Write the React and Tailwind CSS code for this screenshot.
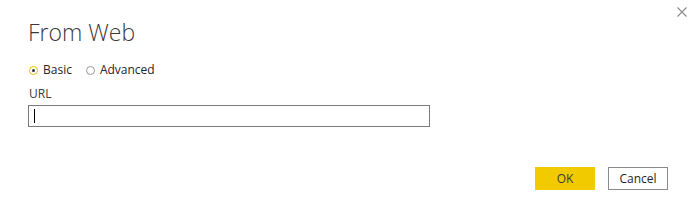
import { useState } from 'react'

const Radio = ({ checked, label, onClick }) => (
  <button onClick={onClick} className="flex items-center gap-[5px] text-[12px] text-[#252423]">
    <span
      className={`w-[9px] h-[9px] rounded-full border-[1.5px] flex items-center justify-center ${
        checked ? 'border-[#e8c000]' : 'border-[#999]'
      }`}
    >
      {checked && <span className="w-[3px] h-[3px] rounded-full bg-[#333]" />}
    </span>
    <span>{label}</span>
  </button>
)

const App = () => {
  const [mode, setMode] = useState('basic')

  return (
    <div
      className="relative w-[696px] h-[211px] bg-white overflow-hidden"
      style={{ fontFamily: '"Open Sans", "Noto Sans", sans-serif' }}
    >
      {/* Close */}
      <button className="absolute top-[7px] left-[677px] w-[10px] h-[10px]">
        <svg width="10" height="10" viewBox="0 0 10 10">
          <path d="M0.5 0.5 L9.5 9.5 M9.5 0.5 L0.5 9.5" stroke="#8a8a8a" strokeWidth="1.1" />
        </svg>
      </button>

      <div className="flex flex-col pl-[28px] pt-[17px]">
        <h1 className="text-[23px] font-light text-[#3b3a39] leading-[30px]">From Web</h1>

        <div className="flex items-center gap-[14px] mt-[14px] ml-[1px]">
          <Radio checked={mode === 'basic'} label="Basic" onClick={() => setMode('basic')} />
          <Radio checked={mode === 'advanced'} label="Advanced" onClick={() => setMode('advanced')} />
        </div>

        <label className="text-[12px] text-[#3b3a39] mt-[6px] ml-[1px] leading-[17px]">URL</label>
        <div className="mt-[3px] w-[402px] h-[22px] border border-[#7a7a7a] flex items-center pl-[5px]">
          <span className="w-[1px] h-[14px] bg-black" />
        </div>

        <div className="flex justify-end gap-[13px] mt-[40px] pr-[28px]">
          <button className="w-[60px] h-[23px] bg-[#f2ca00] text-[12px] text-[#3b3a39]">OK</button>
          <button className="w-[60px] h-[23px] border border-[#8a8a8a] bg-white text-[12px] text-[#252423]">
            Cancel
          </button>
        </div>
      </div>
    </div>
  )
}

export default App
